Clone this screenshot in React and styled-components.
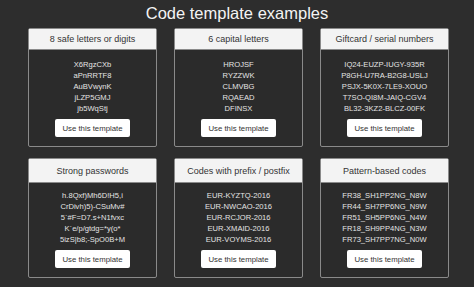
import React from "react";
import styled, { createGlobalStyle } from "styled-components";

const GlobalStyle = createGlobalStyle`
  html, body {
    margin: 0;
    padding: 0;
    background: #2d2d2d;
  }
  body {
    font-family: "Liberation Sans", Arial, sans-serif;
  }
`;

const templates = [
  {
    title: "8 safe letters or digits",
    codes: ["X6RgzCXb", "aPnRRTF8", "AuBVwynK", "jLZP5GMJ", "jb5WqStj"],
  },
  {
    title: "6 capital letters",
    codes: ["HROJSF", "RYZZWK", "CLMVBG", "RQAEAD", "DFINSX"],
  },
  {
    title: "Giftcard / serial numbers",
    codes: [
      "IQ24-EUZP-IUGY-935R",
      "P8GH-U7RA-B2G8-USLJ",
      "PSJX-5K0X-7LE9-XOUO",
      "T7SO-QI8M-JAIQ-CGV4",
      "BL32-3KZ2-BLCZ-00FK",
    ],
  },
  {
    title: "Strong passwords",
    codes: [
      "h.8Qxf)Mh6D!H5,i",
      "CrDivh)5)-CSuMv#",
      "5`#F=D7.s+N1fvxc",
      "K`e/p/gtdg=*y(o*",
      "5izS|b8;-SpO0B+M",
    ],
  },
  {
    title: "Codes with prefix / postfix",
    codes: [
      "EUR-KYZTQ-2016",
      "EUR-NWCAO-2016",
      "EUR-RCJOR-2016",
      "EUR-XMAID-2016",
      "EUR-VOYMS-2016",
    ],
  },
  {
    title: "Pattern-based codes",
    codes: [
      "FR38_SH1PP2NG_N8W",
      "FR44_SH7PP6NG_N9W",
      "FR51_SH5PP6NG_N4W",
      "FR18_SH9PP4NG_N3W",
      "FR73_SH7PP7NG_N0W",
    ],
  },
];

const Page = styled.div`
  width: 474px;
  padding-top: 3px;
`;

const Title = styled.h1`
  margin: 0 0 5px;
  font-size: 16.5px;
  line-height: 20px;
  font-weight: normal;
  color: #f4f4f4;
  text-align: center;
`;

const Grid = styled.div`
  display: grid;
  grid-template-columns: repeat(3, 129px);
  column-gap: 17px;
  row-gap: 11px;
  margin-left: 28px;
`;

const Card = styled.div`
  border: 1px solid #8a8a8a;
  border-radius: 2px;
  background: #2b2b2b;
  display: flex;
  flex-direction: column;
`;

const CardHeader = styled.div`
  height: ${(p) => p.$h}px;
  display: flex;
  align-items: center;
  justify-content: center;
  background: #f3f3f3;
  color: #333;
  font-size: 9px;
  border-bottom: 1px solid #8a8a8a;
`;

const CardBody = styled.div`
  display: flex;
  flex-direction: column;
  align-items: center;
  padding: ${(p) => p.$top}px 0 9px;
`;

const Code = styled.div`
  font-size: 7.6px;
  line-height: 11px;
  color: #e4e4e4;
  white-space: nowrap;
`;

const Button = styled.button`
  margin-top: 5px;
  height: 18px;
  padding: 0 7px;
  border: none;
  border-radius: 2px;
  background: #fff;
  color: #333;
  font-family: "Liberation Sans", Arial, sans-serif;
  font-size: 7.8px;
  cursor: pointer;
`;

export default function App() {
  return (
    <Page>
      <GlobalStyle />
      <Title>Code template examples</Title>
      <Grid>
        {templates.map((t, i) => (
          <Card key={t.title}>
            <CardHeader $h={i < 3 ? 20 : 23}>{t.title}</CardHeader>
            <CardBody $top={i < 3 ? 9 : 7}>
              {t.codes.map((c) => (
                <Code key={c}>{c}</Code>
              ))}
              <Button>Use this template</Button>
            </CardBody>
          </Card>
        ))}
      </Grid>
    </Page>
  );
}
